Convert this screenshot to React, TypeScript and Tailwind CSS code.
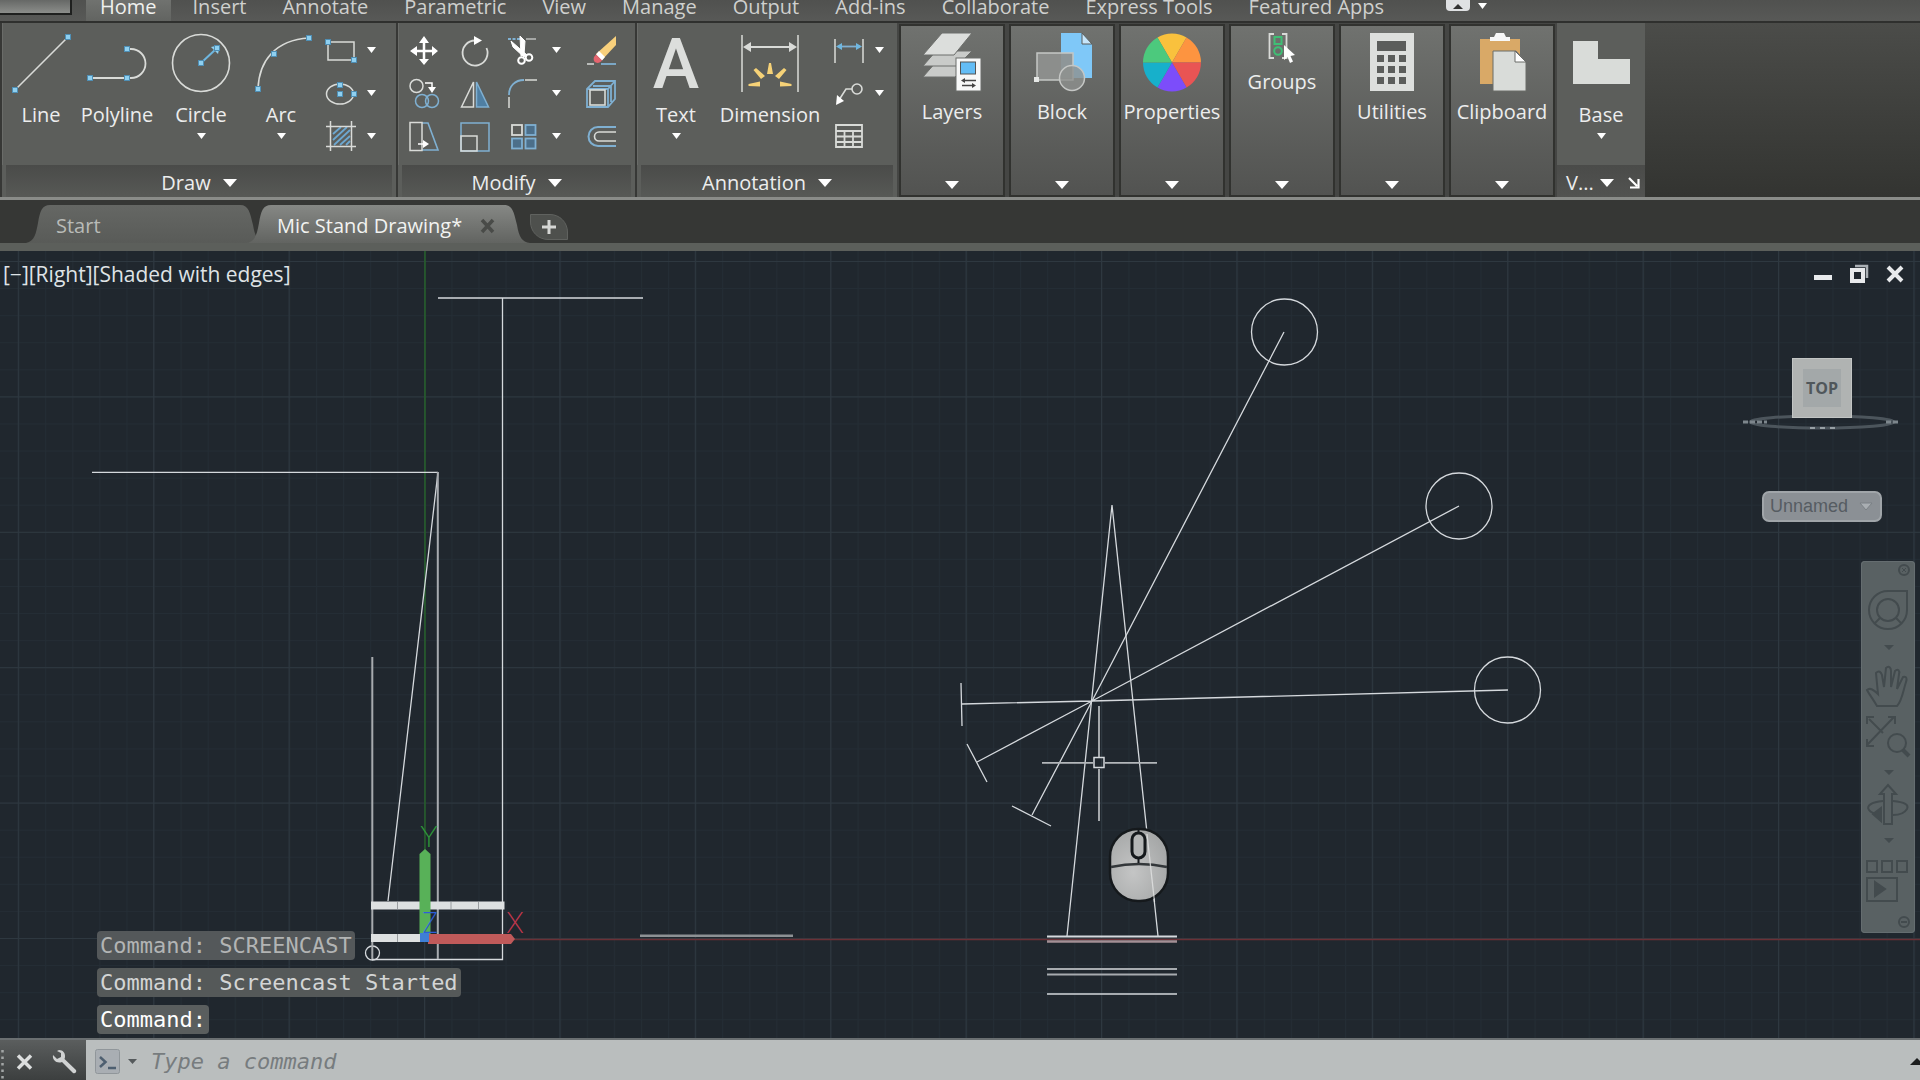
import type { ReactNode } from "react";

const LIGHT = "#d9dbd8";
const BLUE = "#7fb0d2";
const NODE = "#8fd0f0";

function Svg({ w, h, children }: { w: number; h: number; children: ReactNode }) {
  return (
    <svg width={w} height={h} viewBox={`0 0 ${w} ${h}`} fill="none" aria-hidden="true" className="block shrink-0 overflow-visible">
      {children}
    </svg>
  );
}

function Nodes({ at }: { at: [number, number][] }) {
  return (
    <>
      {at.map(([x, y]) => (
        <rect key={`${x}-${y}`} x={x - 2.5} y={y - 2.5} width="5" height="5" fill={NODE} stroke="#4f8fb5" strokeWidth="1" />
      ))}
    </>
  );
}

function Caret({ big = false }: { big?: boolean }) {
  return big ? (
    <Svg w={14} h={8}>
      <path d="M0 0H14L7 8Z" fill="#fff" />
    </Svg>
  ) : (
    <Svg w={9} h={6}>
      <path d="M0 0H9L4.5 6Z" fill="#fff" />
    </Svg>
  );
}

/* ---------- Large ribbon icons (60 x 60) ---------- */

const LineIcon = () => (
  <Svg w={60} h={60}>
    <path d="M4 57L57 4" stroke={LIGHT} strokeWidth="1.6" />
    <Nodes at={[[4, 57], [57, 4]]} />
  </Svg>
);

const PolylineIcon = () => (
  <Svg w={60} h={60}>
    <path d="M3 45H44A14.5 14.5 0 0 0 44 16H40" stroke={LIGHT} strokeWidth="1.8" />
    <Nodes at={[[3, 45], [40, 45], [40, 16]]} />
  </Svg>
);

const CircleIcon = () => (
  <Svg w={60} h={60}>
    <circle cx="30" cy="30" r="28.5" stroke={LIGHT} strokeWidth="1.6" />
    <path d="M30 30L45 16" stroke="#6fb7e0" strokeWidth="2" />
    <path d="M49 12L47 21L40 14Z" fill={NODE} />
    <Nodes at={[[30, 30], [46, 15]]} />
  </Svg>
);

const ArcIcon = () => (
  <Svg w={60} h={60}>
    <path d="M7 56C8 28 24 7 58 5" stroke={LIGHT} strokeWidth="1.6" />
    <Nodes at={[[7, 56], [23, 21], [58, 5]]} />
  </Svg>
);

const DimensionIcon = () => (
  <Svg w={60} h={60}>
    <path d="M2 2V59M58 2V59" stroke={LIGHT} strokeWidth="1.5" />
    <path d="M6 14H54" stroke={LIGHT} strokeWidth="2" />
    <path d="M3 14L11 9V19ZM57 14L49 9V19Z" fill={LIGHT} />
    <path
      d="M29 30H31L33 41H27ZM13.5 37L16 35L25 43L21 46ZM46.5 37L44 35L35 43L39 46ZM8.500 51L20 48.500V53.500L8.500 53ZM51.500 51L40 48.500V53.500L51.500 53Z"
      fill="#f6d277"
    />
  </Svg>
);

const LayersIcon = () => (
  <Svg w={60} h={60}>
    <path d="M1 44L14 29H48L33 44Z" fill="#c9cbc9" stroke="#6d6f6c" />
    <path d="M1 33L14 18H50L35 33Z" fill="#c9cbc9" stroke="#6d6f6c" />
    <path d="M1 22L20 0H50L32 22Z" fill="#dcdedc" stroke="#6d6f6c" />
    <rect x="34" y="25" width="25" height="33" fill="#f7f8f8" stroke="#6d6f6c" />
    <rect x="38.500" y="29" width="15" height="12" fill="#63bdf6" stroke="#555" />
    <path d="M41 47.500H54M40 52.500H52" stroke="#444" strokeWidth="1.400" />
    <path d="M39 47.500L43 45V50ZM54 52.500L50 50V55Z" fill="#444" />
  </Svg>
);

const BlockIcon = () => (
  <Svg w={60} h={60}>
    <path d="M29 0H50L60 11V45H29Z" fill="#7fc8f8" />
    <path d="M50 0V11H60Z" fill="#c6e6fb" stroke="#5b5d5a" />
    <rect x="5" y="20" width="36" height="27" fill="#8f918f" stroke="#c5c7c5" strokeWidth="1.500" fillOpacity=".92" />
    <circle cx="40" cy="45" r="12.500" fill="#8f918f" stroke="#c5c7c5" strokeWidth="1.500" fillOpacity=".8" />
    <rect x="2" y="44" width="5" height="5" fill="#e6e8e6" />
  </Svg>
);

const WHEEL = ["#f9c13d", "#fd9440", "#e95454", "#7c4dfa", "#17b0cb", "#4cc97d"];

const PropertiesIcon = () => (
  <Svg w={60} h={60}>
    {WHEEL.map((c, i) => (
      <path key={c} d="M30 29.500L15.500 4.400A29 29 0 0 1 44.500 4.400Z" fill={c} transform={`rotate(${i * 60} 30 29.500)`} />
    ))}
  </Svg>
);

const GroupsIcon = () => (
  <Svg w={28} h={30}>
    <path d="M6 1H1.500V25H6M14 1H18.500V25H14" stroke={LIGHT} strokeWidth="1.800" />
    <rect x="6.500" y="4" width="7" height="7" stroke="#3fbf75" strokeWidth="2" />
    <circle cx="10" cy="18" r="3.800" stroke="#3fbf75" strokeWidth="2" />
    <path d="M16 12L27 22L22.500 23L25 28.500L22 30L19.500 24L16 27Z" fill="#fff" />
  </Svg>
);

const UtilitiesIcon = () => (
  <Svg w={60} h={60}>
    <rect x="8" y="0" width="44" height="58" fill="#dddfdd" />
    <rect x="15" y="8" width="29" height="10" fill="#5b5d5b" />
    {[22, 33, 44].map((y) =>
      [15, 26, 37].map((x) => <rect key={`${x}${y}`} x={x} y={y} width="7" height="7" fill="#5b5d5b" />),
    )}
  </Svg>
);

const ClipboardIcon = () => (
  <Svg w={60} h={60}>
    <rect x="8" y="6" width="40" height="45" fill="#d9a967" />
    <path d="M18 8V4H22L24 0H32L34 4H38V8Z" fill="#f7f8f8" />
    <path d="M21 18H44L54 29V58H21Z" fill="#d9dcd9" stroke="#6a6c69" />
    <path d="M43 18V29H54Z" fill="#fff" stroke="#6a6c69" />
  </Svg>
);

const BaseIcon = () => (
  <Svg w={60} h={60}>
    <path d="M2 8H27V26H59V51H2Z" fill="#d9dcd9" />
  </Svg>
);

/* ---------- Small ribbon icons (32 x 32) ---------- */

const RectIcon = () => (
  <Svg w={32} h={32}>
    <rect x="3" y="8" width="26" height="18" stroke={LIGHT} strokeWidth="1.500" />
    <Nodes at={[[3, 8], [29, 26]]} />
  </Svg>
);

const EllipseIcon = () => (
  <Svg w={32} h={32}>
    <ellipse cx="15" cy="17" rx="13.500" ry="10" stroke={LIGHT} strokeWidth="1.500" />
    <Nodes at={[[15, 8], [29, 17], [15, 17]]} />
  </Svg>
);

const HatchIcon = () => (
  <Svg w={32} h={32}>
    <path d="M8 14L16 7M8 20L22 7M9 25L25 10M15 25L25 16M21 25L25 21" stroke="#6da7d0" strokeWidth="1.800" />
    <path d="M5.500 1V31M26.500 1V31M1 6.500H31M1 26.500H31" stroke={LIGHT} strokeWidth="1.500" />
  </Svg>
);

const MoveIcon = () => (
  <Svg w={32} h={32}>
    <path d="M16 6V28M5 17H27" stroke="#fff" strokeWidth="2.500" />
    <path d="M16 2L21 9H11ZM16 31L21 25H11ZM2 17L9 12V22ZM30 17L24 12V22Z" fill="#fff" />
  </Svg>
);

const RotateIcon = () => (
  <Svg w={32} h={32}>
    <path d="M27.500 14A12.500 12.500 0 1 1 16 6.500" stroke={LIGHT} strokeWidth="1.800" />
    <path d="M15 2L23 6.500L15 11Z" fill="#fff" />
  </Svg>
);

const TrimIcon = () => (
  <Svg w={32} h={32}>
    <path d="M2 5H17" stroke={BLUE} strokeWidth="2" strokeDasharray="3 1.500" />
    <path d="M20 5H30" stroke="#a5a7a5" strokeWidth="2" />
    <path d="M5 7L21 21L18 23L7 13ZM14 2L19 7L18 21L15 22Z" fill="#fff" stroke="#fff" />
    <circle cx="15.500" cy="26.500" r="3.300" stroke="#fff" strokeWidth="2" />
    <circle cx="23" cy="23.500" r="3.300" stroke="#fff" strokeWidth="2" />
  </Svg>
);

const EraseIcon = () => (
  <Svg w={32} h={32}>
    <path d="M2 30H9" stroke={LIGHT} strokeWidth="1.500" />
    <path d="M16 30H31" stroke={BLUE} strokeWidth="1.800" />
    <path d="M31 2V11L17 26L11 20Z" fill="#f8d07c" />
    <path d="M14 17L20 23L17 26.500L11 20.500Z" fill="#fff" />
    <path d="M11 20.500L17 26.500C14 31 7 29 9 23Z" fill="#e5646e" />
  </Svg>
);

const CopyIcon = () => (
  <Svg w={32} h={32}>
    <circle cx="8.500" cy="9" r="6.500" stroke={LIGHT} strokeWidth="1.500" />
    <circle cx="14" cy="24" r="6.500" stroke={BLUE} strokeWidth="1.500" />
    <circle cx="24" cy="24" r="6.500" stroke={BLUE} strokeWidth="1.500" />
    <path d="M17 6H24V11" stroke="#fff" strokeWidth="1.500" />
    <path d="M20 10H28L24 16Z" fill="#fff" />
  </Svg>
);

const MirrorIcon = () => (
  <Svg w={32} h={32}>
    <path d="M14.500 5V30H2.500Z" stroke={LIGHT} strokeWidth="1.500" />
    <path d="M17.500 5V30H29.500Z" fill="#4f7fa3" stroke={BLUE} strokeWidth="1.500" />
  </Svg>
);

const FilletIcon = () => (
  <Svg w={32} h={32}>
    <path d="M3 18C3 9 9 3 18 3" stroke={BLUE} strokeWidth="1.800" />
    <path d="M19 3H31M3 20V31" stroke={LIGHT} strokeWidth="1.500" />
  </Svg>
);

const BoxIcon = () => (
  <Svg w={32} h={32}>
    <path d="M2 12L10 4H30V22L23 30H2ZM2 12H23V30M23 12L30 4M8 9H26V25" stroke={BLUE} strokeWidth="1.800" />
    <rect x="5" y="13" width="15" height="15" fill="#5c5e5b" stroke={LIGHT} strokeWidth="1.600" />
  </Svg>
);

const StretchIcon = () => (
  <Svg w={32} h={32}>
    <path d="M14 3H20L30 30H14" stroke={BLUE} strokeWidth="1.600" />
    <rect x="2" y="2.500" width="12" height="28" stroke={LIGHT} strokeWidth="1.500" />
    <path d="M10 24H17" stroke="#fff" strokeWidth="1.500" />
    <path d="M15 20L21 24L15 28Z" fill="#fff" />
  </Svg>
);

const ScaleIcon = () => (
  <Svg w={32} h={32}>
    <rect x="2" y="3" width="28" height="28" stroke={BLUE} strokeWidth="1.500" />
    <rect x="2" y="16" width="16" height="15" stroke={LIGHT} strokeWidth="1.500" />
  </Svg>
);

const ArrayIcon = () => (
  <Svg w={32} h={32}>
    <rect x="6" y="5" width="10" height="10" stroke={LIGHT} strokeWidth="1.800" />
    <g stroke={BLUE} strokeWidth="1.800" fill="#4c6f8a">
      <rect x="19.500" y="5" width="10" height="10" />
      <rect x="6" y="18.500" width="10" height="10" />
      <rect x="19.500" y="18.500" width="10" height="10" />
    </g>
  </Svg>
);

const OffsetIcon = () => (
  <Svg w={32} h={32}>
    <path d="M31 7H13A9.500 9.500 0 0 0 13 26H31" stroke={BLUE} strokeWidth="2" />
    <path d="M31 12H14A4.500 4.500 0 0 0 14 21H31" stroke={LIGHT} strokeWidth="1.600" />
  </Svg>
);

const LinearDimIcon = () => (
  <Svg w={32} h={32}>
    <path d="M2 5V29M30 5V29" stroke={LIGHT} strokeWidth="1.500" />
    <path d="M5 12.500H27" stroke={BLUE} strokeWidth="1.800" />
    <path d="M3 12.500L9 9V16ZM29 12.500L23 9V16Z" fill="#6fb7e0" />
  </Svg>
);

const LeaderIcon = () => (
  <Svg w={32} h={32}>
    <circle cx="24" cy="12" r="5" stroke={LIGHT} strokeWidth="1.600" />
    <path d="M19 12H13L6 23" stroke={LIGHT} strokeWidth="1.600" />
    <path d="M3 28L4 18L11 24Z" fill="#fff" />
  </Svg>
);

const TableIcon = () => (
  <Svg w={32} h={32}>
    <path d="M3 5H29V27H3ZM3 11H29M3 16.500H29M3 22H29M11.500 11V27M20 11V27" stroke={LIGHT} strokeWidth="1.800" />
  </Svg>
);

/* ---------- Ribbon ---------- */

function BigTool({ label, icon, width, caret }: { label: string; icon: ReactNode; width: string; caret?: boolean }) {
  return (
    <button type="button" className={`flex flex-col items-center pt-[10px] ${width}`}>
      {icon}
      <span className="mt-2 text-[20px] leading-7">{label}</span>
      {caret && (
        <span className="mt-1">
          <Caret />
        </span>
      )}
    </button>
  );
}

function IconButton({ label, children }: { label: string; children: ReactNode }) {
  return (
    <button type="button" aria-label={label} className="flex items-center justify-center">
      {children}
    </button>
  );
}

function Panel({ title, width, children }: { title: string; width: string; children: ReactNode }) {
  return (
    <section className={`flex shrink-0 flex-col border-l-2 border-[#373836] bg-[#5c5e5b] ${width}`}>
      <div className="flex flex-1 items-start border-l border-[#6a6c69]">{children}</div>
      <button
        type="button"
        className="mx-1 flex h-8 items-center justify-center gap-3 bg-linear-to-b from-[#4a4b49] to-[#575956] pt-[3px] text-[20px] leading-7"
      >
        {title}
        <Caret big />
      </button>
    </section>
  );
}

function CollapsedPanel({ title, icon }: { title: string; icon: ReactNode }) {
  return (
    <button
      type="button"
      className="mt-px flex w-[106px] shrink-0 flex-col items-center border-2 border-[#31322f] bg-linear-to-b from-[#70726f] to-[#525351] pt-[7px] pb-[6px]"
    >
      {icon}
      <span className="mt-[5px] flex-1 text-[20px] leading-7">{title}</span>
      <Caret big />
    </button>
  );
}

const MENU = [
  "Insert", "Annotate", "Parametric", "View", "Manage", "Output", "Add-ins", "Collaborate", "Express Tools", "Featured Apps",
];

function MenuBar() {
  return (
    <nav className="flex h-[23px] shrink-0 items-end overflow-hidden border-b-2 border-[#2f302e] bg-linear-to-b from-[#50514f] to-[#585957] text-[20px] leading-7 text-[#cfd0ce]">
      <button
        type="button"
        aria-label="Application menu"
        className="mr-[14px] h-[15px] w-[72px] self-start border-r-2 border-b-2 border-[#1f201f] bg-linear-to-b from-[#666866] to-[#8c8e8b]"
      />
      <div className="flex gap-2">
        <a href="#home" className="bg-linear-to-b from-[#757774] to-[#626461] px-[14px] text-[#f0f1ef]">
          Home
        </a>
        {MENU.map((m) => (
          <a key={m} href={`#${m}`} className="px-[14px] whitespace-nowrap">
            {m}
          </a>
        ))}
      </div>
      <div className="ml-12 flex items-center gap-2 self-start">
        <button type="button" aria-label="Minimize ribbon" className="flex h-[11px] w-6 items-center justify-center rounded-b bg-[#dfe1e3]">
          <Svg w={10} h={6}>
            <path d="M5 1L10 6H0Z" fill="#333" />
          </Svg>
        </button>
        <Caret />
      </div>
    </nav>
  );
}

function Ribbon() {
  return (
    <div className="flex h-[174px] shrink-0 bg-linear-to-b from-[#4b4c49] to-[#333431] text-[#eceded]">
      <Panel title="Draw" width="w-[396px]">
        <div className="flex pl-[7px]">
          <BigTool label="Line" width="w-[62px]" icon={<LineIcon />} />
          <BigTool label="Polyline" width="w-[90px]" icon={<PolylineIcon />} />
          <BigTool label="Circle" width="w-[78px]" icon={<CircleIcon />} caret />
          <BigTool label="Arc" width="w-[82px]" icon={<ArcIcon />} caret />
        </div>
        <div className="grid grid-cols-[38px_22px] gap-y-[11px] pt-[11px]">
          <IconButton label="Rectangle"><RectIcon /></IconButton>
          <IconButton label="Rectangle options"><Caret /></IconButton>
          <IconButton label="Ellipse"><EllipseIcon /></IconButton>
          <IconButton label="Ellipse options"><Caret /></IconButton>
          <IconButton label="Hatch"><HatchIcon /></IconButton>
          <IconButton label="Hatch options"><Caret /></IconButton>
        </div>
      </Panel>
      <Panel title="Modify" width="w-[239px]">
        <div className="grid grid-cols-[50px_52px_42px_26px_64px] gap-y-[11px] pt-[11px]">
          <IconButton label="Move"><MoveIcon /></IconButton>
          <IconButton label="Rotate"><RotateIcon /></IconButton>
          <IconButton label="Trim"><TrimIcon /></IconButton>
          <IconButton label="Trim options"><Caret /></IconButton>
          <IconButton label="Erase"><EraseIcon /></IconButton>
          <IconButton label="Copy"><CopyIcon /></IconButton>
          <IconButton label="Mirror"><MirrorIcon /></IconButton>
          <IconButton label="Fillet"><FilletIcon /></IconButton>
          <IconButton label="Fillet options"><Caret /></IconButton>
          <IconButton label="Explode"><BoxIcon /></IconButton>
          <IconButton label="Stretch"><StretchIcon /></IconButton>
          <IconButton label="Scale"><ScaleIcon /></IconButton>
          <IconButton label="Array"><ArrayIcon /></IconButton>
          <IconButton label="Array options"><Caret /></IconButton>
          <IconButton label="Offset"><OffsetIcon /></IconButton>
        </div>
      </Panel>
      <Panel title="Annotation" width="w-[262px]">
        <BigTool
          label="Text"
          width="w-[76px]"
          caret
          icon={<span className="h-[60px] font-[Roboto] text-[70px] leading-[62px] font-medium text-[#dcdedc]">A</span>}
        />
        <BigTool label="Dimension" width="w-[112px]" icon={<DimensionIcon />} />
        <div className="grid grid-cols-[46px_14px] gap-y-[11px] pt-[11px]">
          <IconButton label="Linear"><LinearDimIcon /></IconButton>
          <IconButton label="Linear options"><Caret /></IconButton>
          <IconButton label="Leader"><LeaderIcon /></IconButton>
          <IconButton label="Leader options"><Caret /></IconButton>
          <IconButton label="Table"><TableIcon /></IconButton>
        </div>
      </Panel>
      <div className="flex shrink-0 gap-1 bg-[#454644] px-[2px]">
        <CollapsedPanel title="Layers" icon={<LayersIcon />} />
        <CollapsedPanel title="Block" icon={<BlockIcon />} />
        <CollapsedPanel title="Properties" icon={<PropertiesIcon />} />
        <CollapsedPanel title="Groups" icon={<GroupsIcon />} />
        <CollapsedPanel title="Utilities" icon={<UtilitiesIcon />} />
        <CollapsedPanel title="Clipboard" icon={<ClipboardIcon />} />
      </div>
      <section className="flex w-[88px] shrink-0 flex-col bg-[#5c5e5b]">
        <div className="flex flex-1 items-start">
          <BigTool label="Base" width="w-[88px]" icon={<BaseIcon />} caret />
        </div>
        <div className="flex h-8 items-center gap-[14px] bg-linear-to-b from-[#4a4b49] to-[#525351] pt-[3px] pl-[9px] text-[20px] leading-7">
          <button type="button" className="flex items-center gap-[6px]">
            V...
            <Caret big />
          </button>
          <button type="button" aria-label="View settings">
            <Svg w={12} h={12}>
              <path d="M1 1L9 9M10.500 2V10.500H2" stroke="#fff" strokeWidth="2.200" />
            </Svg>
          </button>
        </div>
      </section>
    </div>
  );
}

/* ---------- Document tabs ---------- */

function TabShape({ w, from, to }: { w: number; from: string; to: string }) {
  return (
    <svg className="absolute inset-0 h-full w-full" viewBox={`0 0 ${w} 38`} preserveAspectRatio="none" aria-hidden="true">
      <defs>
        <linearGradient id={`tab${w}`} x1="0" y1="0" x2="0" y2="1">
          <stop offset="0" stopColor={from} />
          <stop offset="1" stopColor={to} />
        </linearGradient>
      </defs>
      <path
        d={`M0 38C9 36 10 28 12 18C14 6 16 0 24 0H${w - 26}C${w - 17} 0 ${w - 16} 8 ${w - 13} 20C${w - 11} 32 ${w - 8} 37 ${w} 38Z`}
        fill={`url(#tab${w})`}
      />
    </svg>
  );
}

function DocumentTabs() {
  return (
    <div className="flex h-[54px] shrink-0 items-end border-t-[3px] border-b-8 border-t-[#8a8c89] border-b-[#5c5f5b] bg-[#363735] text-[20px] leading-7">
      <button type="button" className="relative ml-[26px] flex h-[38px] w-[240px] items-center pt-1 text-[#b9bbb8]">
        <TabShape w={240} from="#656764" to="#595b58" />
        <span className="relative pl-[30px]">Start</span>
      </button>
      <div className="relative -ml-[19px] flex h-[38px] w-[283px] items-center pt-1 text-[#f2f3f1]">
        <TabShape w={283} from="#868885" to="#626461" />
        <button type="button" className="relative pl-[30px] whitespace-nowrap">
          Mic Stand Drawing*
        </button>
        <button type="button" aria-label="Close tab" className="relative ml-auto mr-[35px]">
          <Svg w={15} h={14}>
            <path d="M2 1L13 13M13 1L2 13" stroke="#494b48" strokeWidth="3.500" />
          </Svg>
        </button>
      </div>
      <button
        type="button"
        aria-label="New tab"
        className="mb-[3px] flex h-[26px] w-[38px] items-center justify-center rounded-tr-[18px] rounded-bl-[18px] border border-[#60625f] bg-[#4e504d]"
      >
        <Svg w={16} h={16}>
          <path d="M8 1V15M1 8H15" stroke="#d5d6d4" strokeWidth="3" />
        </Svg>
      </button>
    </div>
  );
}

/* ---------- Drawing area ---------- */

function Drawing() {
  return (
    <svg
      className="absolute inset-0 h-full w-full"
      viewBox="0 251 1920 787"
      preserveAspectRatio="xMinYMin slice"
      fill="none"
      role="img"
      aria-label="Mic stand drawing"
    >
      <defs>
        <pattern id="minor" x="424.300" y="938" width="27.080" height="27.080" patternUnits="userSpaceOnUse">
          <path d="M.5 0V27.080M0 .5H27.080" stroke="#242d35" />
        </pattern>
        <pattern id="major" x="424" y="938" width="135.400" height="135.400" patternUnits="userSpaceOnUse">
          <path d="M.5 0V135.400M0 .5H135.400" stroke="#2e3840" strokeWidth="1.200" />
        </pattern>
        <radialGradient id="mouse" cx=".4" cy=".6" r=".7">
          <stop offset="0" stopColor="#c4c5c5" />
          <stop offset="1" stopColor="#a2a4a4" />
        </radialGradient>
      </defs>
      <rect x="0" y="251" width="1920" height="900" fill="#20272e" />
      <rect x="0" y="251" width="1920" height="900" fill="url(#minor)" />
      <rect x="0" y="251" width="1920" height="900" fill="url(#major)" />

      <path d="M425 251V850" stroke="#24602a" strokeWidth="1.500" />
      <path d="M514 939.500H1920" stroke="#6a3036" strokeWidth="1.300" />

      {/* side elevation */}
      <g stroke="#d5d9dd" strokeWidth="1.300">
        <path d="M438 298H643M502.500 298V959.500H372M92 472.300H438M438 472L388 901" />
        <circle cx="372.500" cy="953" r="7" />
      </g>
      <path d="M372.300 657V959M437.800 472V959" stroke="#a7abaf" strokeWidth="2" />
      <path d="M371 905.500H504.500M371 938H425" stroke="#dde0e1" strokeWidth="8" />
      <path d="M397.500 902V909M451 902V909M478.500 902V909M397.500 934V942" stroke="#9a9ea1" />
      <path d="M640 935.700H793" stroke="#8d9194" strokeWidth="2.500" />

      {/* front elevation */}
      <g stroke="#d5d9dd" strokeWidth="1.300">
        <path d="M1067 936L1112 505L1158 936" />
        <path d="M1284 332L1092 701L1032 815M1459 506L1092 701L977 762M1508 690L1092 701L962 704" />
        <path d="M1012 806L1051 826M967 744L987 782M961 683L962 726" />
        <circle cx="1284.500" cy="332" r="33" />
        <circle cx="1459" cy="506" r="33" />
        <circle cx="1507.500" cy="690" r="33" />
        <path d="M1047 994H1177" />
      </g>
      <path d="M1047 936.500H1177" stroke="#d5d9dd" strokeWidth="2" />
      <path d="M1047 941.500H1177" stroke="#a38f95" strokeWidth="2.500" />
      <path d="M1047 969H1177M1047 974.500H1177" stroke="#a7abaf" strokeWidth="2.200" />

      {/* UCS icon */}
      <path d="M419.500 854L425 849L430.500 854V934H419.500Z" fill="#58b158" />
      <path d="M428 934H511L515 939L511 944H428Z" fill="#c05a5a" />
      <rect x="420" y="933" width="9" height="9" fill="#3f7fd6" />
      <g fontFamily="Inter, sans-serif" fontWeight="200" fontSize="28" textAnchor="middle">
        <text x="429" y="847" fill="#2f9a3a">Y</text>
        <text x="515" y="933" fill="#c2374e">X</text>
        <text x="430" y="933" fill="#2d5fd8">Z</text>
      </g>

      {/* crosshair cursor */}
      <path d="M1042 762.800H1093M1105 762.800H1157M1099 706V757M1099 769V821" stroke="#b3b7ba" strokeWidth="1.800" />
      <rect x="1094" y="757.500" width="10" height="10" stroke="#d5d9dd" strokeWidth="1.500" />

      {/* mouse overlay */}
      <rect x="1110" y="829" width="58" height="72" rx="28" fill="url(#mouse)" stroke="#15191c" strokeWidth="2.500" />
      <path d="M1111 867Q1139 861 1167 867" stroke="#33373a" strokeWidth="2.500" />
      <path d="M1138.500 829V863" stroke="#15191c" strokeWidth="2" />
      <rect x="1132" y="833" width="13" height="25" rx="6.500" fill="#b4b6b6" stroke="#15191c" strokeWidth="3" />
      <path d="M1147 834L1154.500 902" stroke="#e2e4e4" strokeWidth="1.300" opacity=".8" />
    </svg>
  );
}

function NavigationBar() {
  return (
    <div className="absolute top-[310px] right-[5px] rounded-[4px] bg-[#596163] shadow-[inset_0_0_0_1px_#656d70]">
      <button type="button" aria-label="Navigation bar" className="block">
        <svg width="54" height="372" viewBox="0 0 54 372" fill="none" stroke="#434b4e" strokeWidth="2" aria-hidden="true">
          <circle cx="43" cy="9" r="5" />
          <path d="M41 7L45 11M45 7L41 11" strokeWidth="1" />
          <path d="M27 30H46V49A19 19 0 1 1 27 30Z" />
          <circle cx="27" cy="49" r="11" />
          <path d="M14 62L19 57M35 57L40 62" />
          <path d="M16 145C12 138 8 133 6 129C9 126 13 129 17 133L15 112C18 109 20 111 21 114L23 126L25 107C28 104 30 107 30 110V126L34 110C37 107 39 110 38 113L36 128L42 116C46 115 46 118 45 121C42 130 41 140 36 145Z" />
          <path d="M8 158L22 172M33 156L6 184M27 156H34V163M6 163V156H13M6 178V185H13" />
          <circle cx="36" cy="182" r="9" />
          <path d="M42 189L48 195" strokeWidth="4" />
          <path d="M23 263V233H19L27 224L35 233H31V263Z" />
          <path d="M22 240C10 241 5 245 8 249C10 252 14 253 20 253M32 240C44 241 48 244 46 248C43 253 38 254 32 254" />
          <path d="M12 253L20 247V260Z" fill="#434b4e" />
          <path d="M6 300H16V311H6ZM21 300H31V311H21ZM36 300H46V311H36ZM6 317H36V340H6Z" />
          <path d="M14 321L24 328L14 335Z" fill="#434b4e" />
          <g fill="#434b4e" stroke="none">
            <path d="M23 84H33L28 89ZM23 209H33L28 214ZM23 277H33L28 282Z" />
          </g>
          <circle cx="43" cy="361" r="5" />
          <path d="M40 361H46" />
        </svg>
      </button>
    </div>
  );
}

function Viewport() {
  return (
    <main className="relative min-h-0 flex-1 overflow-hidden bg-[#20272e]">
      <Drawing />
      <div className="absolute top-2 left-[3px] text-[21px] leading-[30px] text-[#dfe3e6]">[−][Right][Shaded with edges]</div>

      <div className="absolute top-3 right-[15px] flex items-center gap-4">
        <button type="button" aria-label="Minimize">
          <Svg w={20} h={22}>
            <rect x="1" y="12" width="18" height="5" fill="#e8eaec" />
          </Svg>
        </button>
        <button type="button" aria-label="Restore">
          <Svg w={20} h={22}>
            <path d="M6 3H18V15" stroke="#aab0b5" strokeWidth="2.500" />
            <rect x="3" y="7" width="11" height="11" fill="#20272e" stroke="#e8eaec" strokeWidth="4" />
          </Svg>
        </button>
        <button type="button" aria-label="Close">
          <Svg w={20} h={22}>
            <path d="M3 4L17 18M17 4L3 18" stroke="#e8eaec" strokeWidth="4" />
          </Svg>
        </button>
      </div>

      <div className="absolute top-[107px] right-[17px] flex w-[162px] flex-col items-center">
        <button
          type="button"
          className="z-10 flex size-[60px] items-center justify-center border border-[#c2c5c4] bg-[#b0b3b2] text-[16px] font-bold text-[#50575b]"
        >
          <span className="flex size-[38px] items-center justify-center bg-[#a3a8a9]">TOP</span>
        </button>
        <div className="-mt-1">
          <Svg w={162} h={18}>
            <ellipse cx="81" cy="8" rx="72" ry="6" stroke="#4c555c" strokeWidth="3" />
            <path d="M2 8H26M145 8H158" stroke="#7d868c" strokeWidth="3" strokeDasharray="5 2" />
            <path d="M69 14H96" stroke="#98a0a5" strokeWidth="2" strokeDasharray="5 5" />
          </Svg>
        </div>
      </div>

      <button
        type="button"
        className="absolute top-[240px] right-[38px] flex h-[31px] w-[120px] items-center justify-between rounded-[7px] border-2 border-[#a0a5a9] bg-[#8b9095] pr-2 pl-[6px] font-['Liberation_Sans'] text-[18px] text-[#565c62]"
      >
        Unnamed
        <Svg w={12} h={7}>
          <path d="M0 0H12L6 7Z" fill="#a9aeb2" stroke="#7a8085" />
        </Svg>
      </button>

      <NavigationBar />

      <ol className="absolute bottom-1 left-[97px] flex flex-col items-start gap-2 font-['DejaVu_Sans_Mono'] text-[22px] leading-[29px] whitespace-pre">
        <li className="rounded-[4px] bg-[#54585a] px-[3px] text-[#b2b4b4]">Command: SCREENCAST</li>
        <li className="rounded-[4px] bg-[#555959] px-[3px] text-[#d3d5d5]">Command: Screencast Started</li>
        <li className="rounded-[4px] bg-[#5a5e5e] px-[3px] text-white">Command:</li>
      </ol>
    </main>
  );
}

function CommandLine() {
  return (
    <form className="flex h-[42px] shrink-0 items-stretch border-t-2 border-[#6a6f71] bg-[#babebe]">
      <div className="flex w-[86px] items-center bg-linear-to-b from-[#5b5e5e] to-[#3c3f3f] pt-[3px]">
        <Svg w={6} h={40}>
          <path d="M2.500 8V38" stroke="#a3a6a6" strokeWidth="2.500" strokeDasharray="2.500 4" />
        </Svg>
        <button type="button" aria-label="Close command line" className="ml-[10px]">
          <Svg w={17} h={16}>
            <path d="M2 1.500L15 14.500M15 1.500L2 14.500" stroke="#dcdede" strokeWidth="3.500" />
          </Svg>
        </button>
        <button type="button" aria-label="Customize" className="ml-[19px]">
          <Svg w={26} h={26}>
            <path
              d="M7 1C11 1 13 4 13 7C13 8 13 9 12.500 10L24 21C25 23 23 25 21 24L10 13C5 15 0 11 1 6L5 10L9 8L9 4L5 2Z"
              fill="#d0d2d2"
            />
          </Svg>
        </button>
      </div>
      <button type="button" aria-label="Recent commands" className="flex items-center gap-2 pt-[3px] pl-[9px]">
        <Svg w={25} h={25}>
          <rect x=".5" y=".5" width="24" height="24" rx="2" fill="#a9aeb3" stroke="#90969a" />
          <path d="M5 8L10.500 13L5 18" stroke="#4e5f70" strokeWidth="2.500" />
          <path d="M13 19H21" stroke="#4e5f70" strokeWidth="2.500" />
        </Svg>
        <Svg w={9} h={5}>
          <path d="M0 0H9L4.500 5Z" fill="#555a5c" />
        </Svg>
      </button>
      <input
        type="text"
        aria-label="Command"
        placeholder="Type a command"
        className="ml-[14px] min-w-0 flex-1 bg-transparent pt-[3px] font-['DejaVu_Sans_Mono'] text-[22px] italic outline-none placeholder:text-[#777c7e]"
      />
      <button type="button" aria-label="Expand history" className="mt-[18px] self-start overflow-hidden">
        <Svg w={10} h={7}>
          <path d="M0 7L7 0L14 7Z" fill="#1c1e1e" />
        </Svg>
      </button>
    </form>
  );
}

export default function App() {
  return (
    <div className="flex h-screen min-h-[640px] flex-col overflow-hidden bg-[#363735] font-['Open_Sans',sans-serif]">
      <MenuBar />
      <Ribbon />
      <DocumentTabs />
      <Viewport />
      <CommandLine />
    </div>
  );
}
